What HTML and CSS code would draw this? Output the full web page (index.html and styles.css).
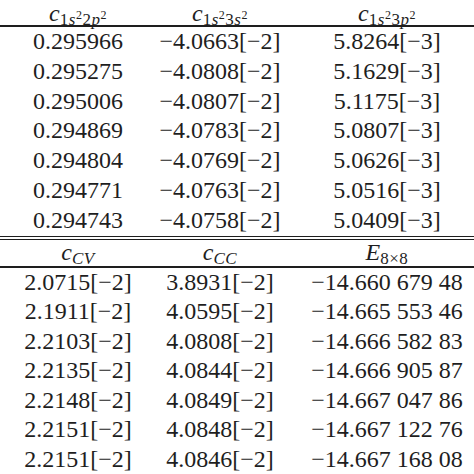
FILE: index.html
```html
<!DOCTYPE html>
<html>
<head>
<meta charset="utf-8">
<link rel="stylesheet" href="styles.css">
</head>
<body>
<div class="table">
  <div class="row head head1">
    <div class="cell c1"><i class="m">c</i><span class="sub">1<i>s</i><sup>2</sup>2<i>p</i><sup>2</sup></span></div>
    <div class="cell c2"><i class="m">c</i><span class="sub">1<i>s</i><sup>2</sup>3<i>s</i><sup>2</sup></span></div>
    <div class="cell c3"><i class="m">c</i><span class="sub">1<i>s</i><sup>2</sup>3<i>p</i><sup>2</sup></span></div>
  </div>
  <div class="rule thick"></div>
  <div class="body top">
    <div class="row"><div class="cell c1">0.295966</div><div class="cell c2">−4.0663[−2]</div><div class="cell c3">5.8264[−3]</div></div>
    <div class="row"><div class="cell c1">0.295275</div><div class="cell c2">−4.0808[−2]</div><div class="cell c3">5.1629[−3]</div></div>
    <div class="row"><div class="cell c1">0.295006</div><div class="cell c2">−4.0807[−2]</div><div class="cell c3">5.1175[−3]</div></div>
    <div class="row"><div class="cell c1">0.294869</div><div class="cell c2">−4.0783[−2]</div><div class="cell c3">5.0807[−3]</div></div>
    <div class="row"><div class="cell c1">0.294804</div><div class="cell c2">−4.0769[−2]</div><div class="cell c3">5.0626[−3]</div></div>
    <div class="row"><div class="cell c1">0.294771</div><div class="cell c2">−4.0763[−2]</div><div class="cell c3">5.0516[−3]</div></div>
    <div class="row"><div class="cell c1">0.294743</div><div class="cell c2">−4.0758[−2]</div><div class="cell c3">5.0409[−3]</div></div>
  </div>
  <div class="double"><div class="rule"></div><div class="rule"></div></div>
  <div class="row head head2">
    <div class="cell c1"><i class="m">c</i><span class="sub"><i>CV</i></span></div>
    <div class="cell c2"><i class="m">c</i><span class="sub"><i>CC</i></span></div>
    <div class="cell c3"><i class="m">E</i><span class="sub">8×8</span></div>
  </div>
  <div class="rule mid"></div>
  <div class="body bottom">
    <div class="row"><div class="cell c1">2.0715[−2]</div><div class="cell c2">3.8931[−2]</div><div class="cell c3">−14.660 679 48</div></div>
    <div class="row"><div class="cell c1">2.1911[−2]</div><div class="cell c2">4.0595[−2]</div><div class="cell c3">−14.665 553 46</div></div>
    <div class="row"><div class="cell c1">2.2103[−2]</div><div class="cell c2">4.0808[−2]</div><div class="cell c3">−14.666 582 83</div></div>
    <div class="row"><div class="cell c1">2.2135[−2]</div><div class="cell c2">4.0844[−2]</div><div class="cell c3">−14.666 905 87</div></div>
    <div class="row"><div class="cell c1">2.2148[−2]</div><div class="cell c2">4.0849[−2]</div><div class="cell c3">−14.667 047 86</div></div>
    <div class="row"><div class="cell c1">2.2151[−2]</div><div class="cell c2">4.0848[−2]</div><div class="cell c3">−14.667 122 76</div></div>
    <div class="row"><div class="cell c1">2.2151[−2]</div><div class="cell c2">4.0846[−2]</div><div class="cell c3">−14.667 168 08</div></div>
  </div>
</div>
</body>
</html>
```

FILE: styles.css
```css
html, body {
  margin: 0;
  padding: 0;
  background: #ffffff;
}
body {
  width: 474px;
  height: 474px;
  overflow: hidden;
  font-family: "Liberation Serif", "Times New Roman", serif;
  font-size: 24px;
  color: #1e1e1e;
}
.table {
  display: flex;
  flex-direction: column;
  width: 474px;
}
.row {
  display: grid;
  grid-template-columns: 156px 128px 190px;
  height: 29.8px;
  line-height: 29.8px;
  white-space: nowrap;
}
.bottom .row {
  height: 29.5px;
  line-height: 29.5px;
}
.cell {
  text-align: center;
}
.c3 {
  padding-left: 16px;
}
.head1 {
  height: 25px;
  line-height: 26px;
}
.head2 {
  height: 26px;
  line-height: 24px;
}
.m {
  font-style: italic;
}
.sub {
  font-size: 17px;
  position: relative;
  top: 4px;
  letter-spacing: 0.5px;
}
.sub sup {
  font-size: 12px;
  vertical-align: baseline;
  position: relative;
  top: -6px;
}
.rule {
  background: #1e1e1e;
  height: 1.5px;
}
.thick {
  height: 2px;
}
.double {
  display: flex;
  flex-direction: column;
  gap: 1.5px;
}
.mid {
  height: 1.7px;
}
```
